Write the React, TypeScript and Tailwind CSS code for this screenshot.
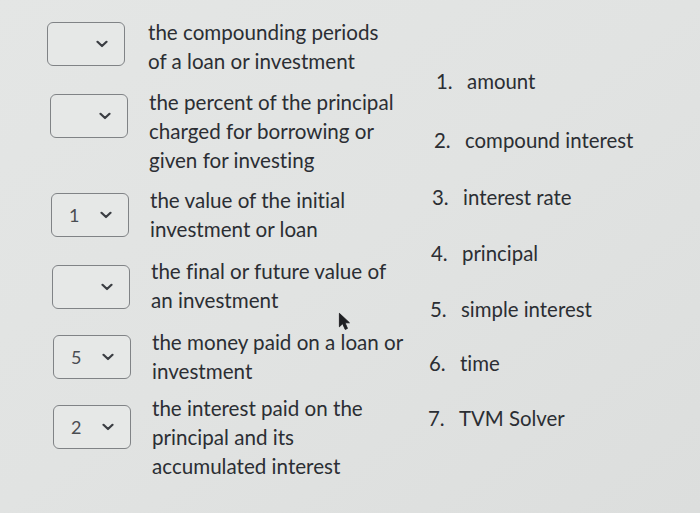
import React from "react";

const Chevron = () => (
  <svg width="12" height="8" viewBox="0 0 12 8" className="block">
    <path d="M1.5 1.8 L6 6 L10.5 1.8" fill="none" stroke="#3a3d42" strokeWidth="2.2" strokeLinecap="round" strokeLinejoin="round" />
  </svg>
);

const Box = ({ value }: { value?: string }) => (
  <div className="w-[78px] h-[44px] rounded-[6px] border-[1.5px] border-[#808386] bg-[#e6e8e7] flex items-center relative">
    {value && <span className="absolute left-[17px] text-[18px] text-[#4a4d52] leading-none">{value}</span>}
    <span className="absolute left-[48px] top-[17px]"><Chevron /></span>
  </div>
);

const rows = [
  { mt: "mt-[18px]", ml: "ml-[47px]", boxMt: "mt-[4px]", textMl: "ml-[23px]", lines: ["the compounding periods", "of a loan or investment"] },
  { mt: "mt-[12px]", ml: "ml-[50px]", boxMt: "mt-[6px]", textMl: "ml-[21px]", lines: ["the percent of the principal", "charged for borrowing or", "given for investing"] },
  { mt: "mt-[11px]", ml: "ml-[51px]", boxMt: "mt-[7px]", textMl: "ml-[21px]", value: "1", lines: ["the value of the initial", "investment or loan"] },
  { mt: "mt-[13px]", ml: "ml-[52px]", boxMt: "mt-[8px]", textMl: "ml-[21px]", lines: ["the final or future value of", "an investment"] },
  { mt: "mt-[13px]", ml: "ml-[53px]", boxMt: "mt-[7px]", textMl: "ml-[21px]", value: "5", lines: ["the money paid on a loan or", "investment"] },
  { mt: "mt-[8px]", ml: "ml-[53px]", boxMt: "mt-[11px]", textMl: "ml-[21px]", value: "2", lines: ["the interest paid on the", "principal and its", "accumulated interest"] },
];

const items = [
  { n: "1.", t: "amount", mt: "mt-[67px]", ml: "ml-[8px]" },
  { n: "2.", t: "compound interest", mt: "mt-[30px]", ml: "ml-[6px]" },
  { n: "3.", t: "interest rate", mt: "mt-[28px]", ml: "ml-[4px]" },
  { n: "4.", t: "principal", mt: "mt-[27px]", ml: "ml-[3px]" },
  { n: "5.", t: "simple interest", mt: "mt-[27px]", ml: "ml-[2px]" },
  { n: "6.", t: "time", mt: "mt-[25px]", ml: "ml-[1px]" },
  { n: "7.", t: "TVM Solver", mt: "mt-[26px]", ml: "ml-0" },
];

export default function App() {
  return (
    <div
      className="w-[700px] h-[513px] overflow-hidden relative bg-gradient-to-br from-[#e4e6e5] via-[#e1e3e2] to-[#dcdedd] text-[#2b2e33] flex [font-variant-ligatures:none]"
      style={{ fontFamily: "Lato, 'Open Sans', sans-serif" }}
    >
      <div className="flex flex-col w-[428px] shrink-0">
        {rows.map((r, i) => (
          <div key={i} className={`flex items-start ${r.mt} ${r.ml}`}>
            <div className={r.boxMt}>
              <Box value={r.value} />
            </div>
            <div className={`${r.textMl} text-[20.6px] leading-[29px] whitespace-nowrap`}>
              {r.lines.map((l, j) => (
                <div key={j}>{l}</div>
              ))}
            </div>
          </div>
        ))}
      </div>
      <div className="flex flex-col">
        {items.map((it, i) => (
          <div key={i} className={`flex text-[20.4px] leading-[29px] whitespace-nowrap ${it.mt} ${it.ml}`}>
            <span className="w-[31px]">{it.n}</span>
            <span>{it.t}</span>
          </div>
        ))}
      </div>
      <svg className="absolute left-[338px] top-[312px]" width="14" height="19" viewBox="0 0 12 16">
        <path d="M1.2 1 L1.2 12.5 L4 9.9 L6.2 14.8 L8.1 13.9 L6 9.1 L9.8 9.1 Z" fill="#1e1f22" stroke="#1e1f22" strokeWidth="0.8" strokeLinejoin="round" />
      </svg>
    </div>
  );
}
